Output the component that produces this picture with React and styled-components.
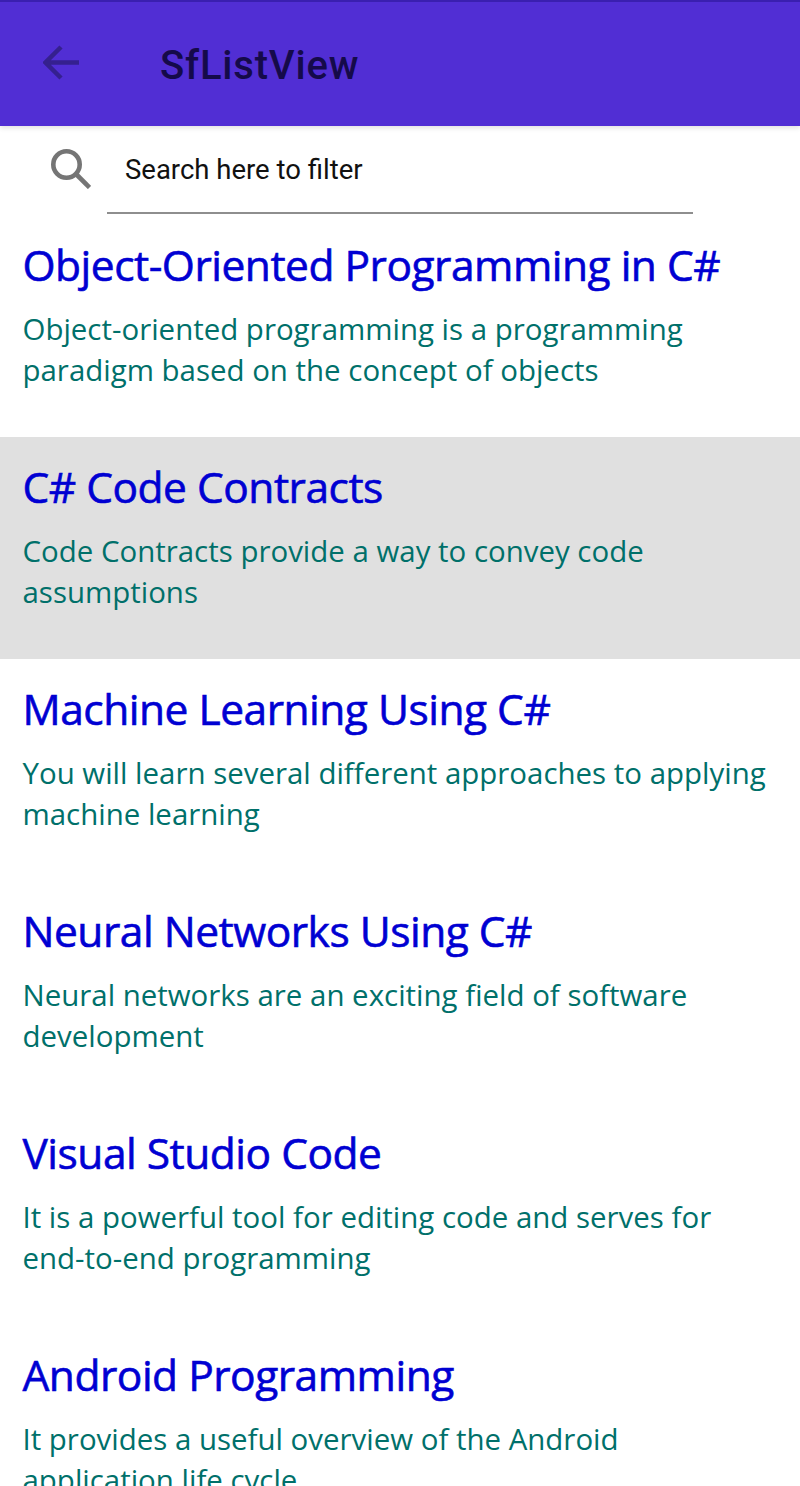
import React from "react";
import styled, { createGlobalStyle } from "styled-components";

const items = [
  {
    title: "Object-Oriented Programming in C#",
    text: ["Object-oriented programming is a programming", "paradigm based on the concept of objects"],
  },
  {
    title: "C# Code Contracts",
    text: ["Code Contracts provide a way to convey code", "assumptions"],
    selected: true,
  },
  {
    title: "Machine Learning Using C#",
    text: ["You will learn several different approaches to applying", "machine learning"],
  },
  {
    title: "Neural Networks Using C#",
    text: ["Neural networks are an exciting field of software", "development"],
  },
  {
    title: "Visual Studio Code",
    text: ["It is a powerful tool for editing code and serves for", "end-to-end programming"],
  },
  {
    title: "Android Programming",
    text: ["It provides a useful overview of the Android", "application life cycle"],
  },
];

const App = () => {
  return (
    <Page>
      <GlobalStyle />
      <AppBar>
        <BackIcon viewBox="0 0 37 37">
          <path d="M36 18.5H3M18 3L2.5 18.5 18 34" />
        </BackIcon>
        <AppTitle>SfListView</AppTitle>
      </AppBar>
      <SearchRow>
        <SearchIcon viewBox="0 0 40 40">
          <circle cx="15.5" cy="15.5" r="13.2" />
          <path d="M25.5 25.5l13 13" />
        </SearchIcon>
        <SearchText>Search here to filter</SearchText>
      </SearchRow>
      <Divider />
      <List>
        {items.map((item) => (
          <Row key={item.title} $selected={item.selected}>
            <Title>{item.title}</Title>
            <Description>
              {item.text.map((line) => (
                <Line key={line}>{line}</Line>
              ))}
            </Description>
          </Row>
        ))}
      </List>
    </Page>
  );
};

const GlobalStyle = createGlobalStyle`
  html, body {
    margin: 0;
    padding: 0;
    background: #fff;
  }
`;

const Page = styled.div`
  width: 800px;
  height: 1486px;
  overflow: hidden;
  background: #fff;
`;

const AppBar = styled.div`
  display: flex;
  align-items: center;
  height: 126px;
  padding: 0 0 0 43px;
  box-sizing: border-box;
  background: #512ed4;
  border-top: 2px solid #3a1fb0;
  box-shadow: 0 2px 5px rgba(0, 0, 0, 0.12);
  position: relative;
`;

const BackIcon = styled.svg`
  width: 37px;
  height: 37px;
  margin: 0 80px 3px 0;
  fill: none;
  stroke: #35208f;
  stroke-width: 4.5;
`;

const AppTitle = styled.div`
  margin-top: 2px;
  font-family: Roboto, sans-serif;
  font-weight: 500;
  font-size: 40px;
  letter-spacing: 0.8px;
  color: #150a4a;
`;

const SearchRow = styled.div`
  display: flex;
  align-items: center;
  height: 86px;
  padding-left: 51px;
  box-sizing: border-box;
`;

const SearchIcon = styled.svg`
  width: 40px;
  height: 40px;
  margin-right: 34px;
  fill: none;
  stroke: #757575;
  stroke-width: 4.6;
`;

const SearchText = styled.div`
  font-family: Roboto, sans-serif;
  font-size: 27.5px;
  color: #111;
`;

const Divider = styled.div`
  height: 2px;
  margin: 0 107px;
  background: #8e8e8e;
`;

const List = styled.div`
  display: flex;
  flex-direction: column;
  margin-top: 1px;
`;

const Row = styled.div`
  height: 222px;
  padding: 21px 0 0 22.5px;
  box-sizing: border-box;
  background: ${(p) => (p.$selected ? "#e0e0e0" : "#fff")};
`;

const Title = styled.div`
  font-family: "Open Sans", sans-serif;
  font-size: 42.5px;
  line-height: 58px;
  letter-spacing: -0.5px;
  -webkit-text-stroke: 0.6px #0000d2;
  color: #0000d2;
`;

const Description = styled.div`
  margin-top: 15px;
  font-family: "Open Sans", sans-serif;
  font-size: 29.45px;
  line-height: 41px;
  color: #00706a;
`;

const Line = styled.div`
  white-space: nowrap;
`;

export default App;
